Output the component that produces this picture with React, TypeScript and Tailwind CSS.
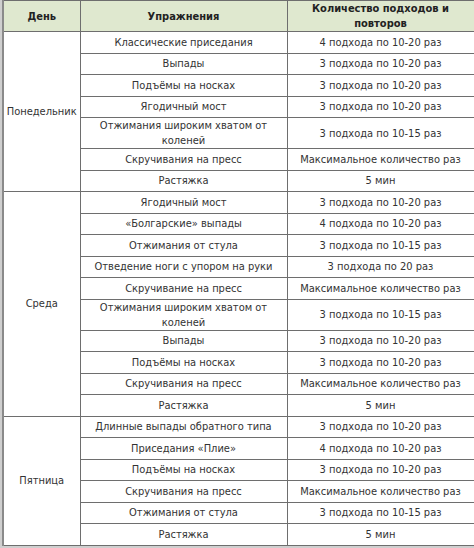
import React from "react";

type Row = { ex: string[]; qty: string };
type Day = { name: string; rows: Row[] };

const days: Day[] = [
  {
    name: "Понедельник",
    rows: [
      { ex: ["Классические приседания"], qty: "4 подхода по 10-20 раз" },
      { ex: ["Выпады"], qty: "3 подхода по 10-20 раз" },
      { ex: ["Подъёмы на носках"], qty: "3 подхода по 10-20 раз" },
      { ex: ["Ягодичный мост"], qty: "3 подхода по 10-20 раз" },
      { ex: ["Отжимания широким хватом от", "коленей"], qty: "3 подхода по 10-15 раз" },
      { ex: ["Скручивания на пресс"], qty: "Максимальное количество раз" },
      { ex: ["Растяжка"], qty: "5 мин" },
    ],
  },
  {
    name: "Среда",
    rows: [
      { ex: ["Ягодичный мост"], qty: "3 подхода по 10-20 раз" },
      { ex: ["«Болгарские» выпады"], qty: "4 подхода по 10-20 раз" },
      { ex: ["Отжимания от стула"], qty: "3 подхода по 10-15 раз" },
      { ex: ["Отведение ноги с упором на руки"], qty: "3 подхода по 20 раз" },
      { ex: ["Скручивание на пресс"], qty: "Максимальное количество раз" },
      { ex: ["Отжимания широким хватом от", "коленей"], qty: "3 подхода по 10-15 раз" },
      { ex: ["Выпады"], qty: "3 подхода по 10-20 раз" },
      { ex: ["Подъёмы на носках"], qty: "3 подхода по 10-20 раз" },
      { ex: ["Скручивания на пресс"], qty: "Максимальное количество раз" },
      { ex: ["Растяжка"], qty: "5 мин" },
    ],
  },
  {
    name: "Пятница",
    rows: [
      { ex: ["Длинные выпады обратного типа"], qty: "3 подхода по 10-20 раз" },
      { ex: ["Приседания «Плие»"], qty: "4 подхода по 10-20 раз" },
      { ex: ["Подъёмы на носках"], qty: "3 подхода по 10-20 раз" },
      { ex: ["Скручивания на пресс"], qty: "Максимальное количество раз" },
      { ex: ["Отжимания от стула"], qty: "3 подхода по 10-15 раз" },
      { ex: ["Растяжка"], qty: "5 мин" },
    ],
  },
];

export default function App() {
  return (
    <div
      className="w-[474px] h-[548px] bg-[#cfcfcf] pl-[2px] overflow-hidden text-[#333] text-[11px] leading-[15px]"
      style={{ fontFamily: '"DejaVu Sans Condensed", "DejaVu Sans", Verdana, sans-serif' }}
    >
      <table className="table-fixed border-collapse w-[471px] bg-white border-l-2 border-l-[#8a8a8a]">
        <colgroup>
          <col className="w-[77px]" />
          <col className="w-[207px]" />
          <col className="w-[187px]" />
        </colgroup>
        <thead>
          <tr className="h-[31px] bg-[#dfe8cf] text-[11px] text-[#222]">
            <th className="border border-[#6e6e6e] font-bold p-0 text-center">День</th>
            <th className="border border-[#6e6e6e] font-bold p-0 text-center">Упражнения</th>
            <th className="border border-[#6e6e6e] font-bold p-0 text-center">
              Количество подходов и
              <br />
              повторов
            </th>
          </tr>
        </thead>
        <tbody>
          {days.map((d) =>
            d.rows.map((r, i) => (
              <tr key={d.name + i} className={r.ex.length > 1 ? "h-[30.5px]" : "h-[21.5px]"}>
                {i === 0 && (
                  <td
                    rowSpan={d.rows.length}
                    className="border border-[#6e6e6e] p-0 text-center align-middle"
                  >
                    {d.name}
                  </td>
                )}
                <td className="border border-[#6e6e6e] p-0 text-center align-middle">
                  {r.ex.map((t, k) => (
                    <div key={k}>{t}</div>
                  ))}
                </td>
                <td className="border border-[#6e6e6e] p-0 text-center align-middle">{r.qty}</td>
              </tr>
            ))
          )}
        </tbody>
      </table>
    </div>
  );
}
